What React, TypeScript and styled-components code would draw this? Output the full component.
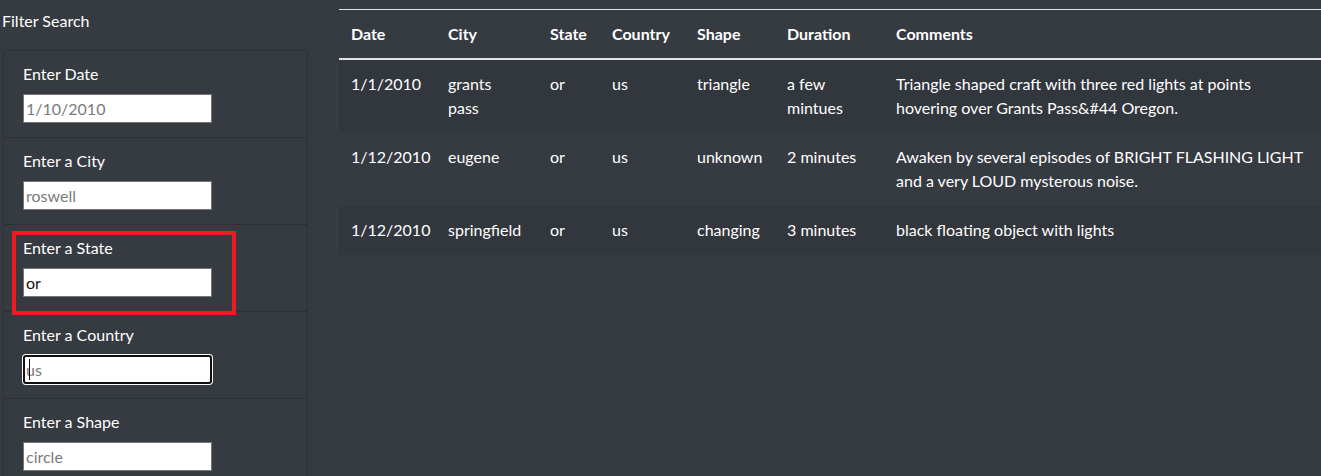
import React from "react";
import styled, { createGlobalStyle } from "styled-components";

interface Sighting {
  date: string;
  city: string;
  state: string;
  country: string;
  shape: string;
  duration: string;
  comments: string;
}

const sightings: Sighting[] = [
  {
    date: "1/1/2010",
    city: "grants pass",
    state: "or",
    country: "us",
    shape: "triangle",
    duration: "a few mintues",
    comments:
      "Triangle shaped craft with three red lights at points hovering over Grants Pass&#44 Oregon."
  },
  {
    date: "1/12/2010",
    city: "eugene",
    state: "or",
    country: "us",
    shape: "unknown",
    duration: "2 minutes",
    comments:
      "Awaken by several episodes of BRIGHT FLASHING LIGHT and a very LOUD mysterous noise."
  },
  {
    date: "1/12/2010",
    city: "springfield",
    state: "or",
    country: "us",
    shape: "changing",
    duration: "3 minutes",
    comments: "black floating object with lights"
  }
];

const filters = [
  { label: "Enter Date", placeholder: "1/10/2010" },
  { label: "Enter a City", placeholder: "roswell" },
  { label: "Enter a State", placeholder: "", value: "or", highlighted: true },
  { label: "Enter a Country", placeholder: "us", focused: true },
  { label: "Enter a Shape", placeholder: "circle" }
];

const columns = [
  { title: "Date", width: 97 },
  { title: "City", width: 102 },
  { title: "State", width: 62 },
  { title: "Country", width: 85 },
  { title: "Shape", width: 90 },
  { title: "Duration", width: 109 },
  { title: "Comments", width: undefined }
];

const App = () => {
  return (
    <>
      <GlobalStyle />
      <Page>
        <Sidebar>
          <SidebarTitle>Filter Search</SidebarTitle>
          <FilterCard>
            {filters.map((f) => (
              <FilterItem key={f.label}>
                {f.highlighted && <Highlight />}
                <Label>{f.label}</Label>
                <Input
                  type="text"
                  placeholder={f.placeholder}
                  defaultValue={f.value}
                  $focused={f.focused}
                />
                {f.focused && <Caret />}
              </FilterItem>
            ))}
          </FilterCard>
        </Sidebar>
        <TableWrap>
          <Table>
            <colgroup>
              {columns.map((c) => (
                <col key={c.title} style={c.width ? { width: c.width } : undefined} />
              ))}
            </colgroup>
            <thead>
              <tr>
                {columns.map((c) => (
                  <HeadCell key={c.title}>{c.title}</HeadCell>
                ))}
              </tr>
            </thead>
            <tbody>
              {sightings.map((s, i) => (
                <Row key={i} $striped={i % 2 === 0}>
                  <Cell>{s.date}</Cell>
                  <Cell>{s.city}</Cell>
                  <Cell>{s.state}</Cell>
                  <Cell>{s.country}</Cell>
                  <Cell>{s.shape}</Cell>
                  <Cell>{s.duration}</Cell>
                  <Cell>{s.comments}</Cell>
                </Row>
              ))}
            </tbody>
          </Table>
        </TableWrap>
      </Page>
    </>
  );
};

export default App;

const GlobalStyle = createGlobalStyle`
  html, body {
    margin: 0;
    background: #363a41;
    color: #ffffff;
    font-family: Lato, "Open Sans", "Liberation Sans", sans-serif;
    font-size: 16px;
    line-height: 24px;
  }
  * {
    box-sizing: border-box;
  }
`;

const Page = styled.div`
  display: flex;
  align-items: flex-start;
  min-height: 476px;
  overflow: hidden;
`;

const Sidebar = styled.div`
  width: 308px;
  flex-shrink: 0;
  padding: 9px 0 0 0;
`;

const SidebarTitle = styled.div`
  padding-left: 2px;
  margin-bottom: 17px;
`;

const FilterCard = styled.div`
  margin-left: 3px;
  border: 1px solid #2d3137;
  border-radius: 4px;
  display: flex;
  flex-direction: column;
`;

const FilterItem = styled.div`
  position: relative;
  padding: 11px 19px 14px;
  border-bottom: 1px solid #2d3137;
  display: flex;
  flex-direction: column;
  align-items: flex-start;
`;

const Highlight = styled.div`
  position: absolute;
  left: 8px;
  top: 6px;
  width: 224px;
  height: 84px;
  border: 4px solid #ed1c24;
  pointer-events: none;
  z-index: 1;
`;

const Label = styled.label`
  margin-bottom: 8px;
`;

const Input = styled.input<{ $focused?: boolean }>`
  width: 189px;
  height: 29px;
  padding: 1px 2px;
  font-family: inherit;
  font-size: 16px;
  color: #111;
  background: #fff;
  border: 1px solid #767676;
  border-radius: 0;
  outline: none;

  &::placeholder {
    color: #7a7a7a;
  }

  ${({ $focused }) =>
    $focused &&
    `
    border: 2px solid #101010;
    border-radius: 3px;
    box-shadow: 0 0 0 1px #ffffff;
    padding: 0 1px;
  `}
`;

const Caret = styled.span`
  position: absolute;
  left: 25px;
  top: 47px;
  width: 1px;
  height: 21px;
  background: #111;
`;

const TableWrap = styled.div`
  flex: 1;
  margin-left: 31px;
  padding-top: 9px;
`;

const Table = styled.table`
  width: 100%;
  table-layout: fixed;
  border-collapse: collapse;
  color: #ffffff;
`;

const HeadCell = styled.th`
  text-align: left;
  font-weight: 700;
  padding: 12px;
  border-top: 1px solid #dee2e6;
  border-bottom: 2px solid #dee2e6;
  vertical-align: bottom;
`;

const Row = styled.tr<{ $striped: boolean }>`
  background: ${({ $striped }) => ($striped ? "#32363d" : "#363a41")};
  & + & td {
    border-top: 1px solid #dee2e6;
  }
`;

const Cell = styled.td`
  padding: 12px 12px 13px;
  vertical-align: top;
`;
